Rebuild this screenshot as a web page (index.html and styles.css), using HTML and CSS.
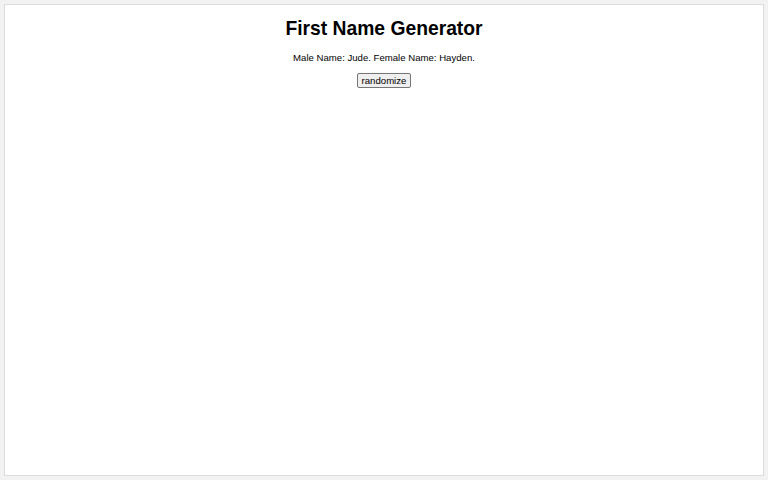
FILE: index.html
```html
<!DOCTYPE html>
<html lang="en">

<head>
    <meta charset="UTF-8">
    <meta name="viewport" content="width=device-width, initial-scale=1.0">
    <title>First Name Generator</title>
    <link rel="stylesheet" href="styles.css">
</head>

<body>
    <div class="page">
        <h1>First Name Generator</h1>
        <p id="names">Male Name: Jude. Female Name: Hayden.</p>
        <button id="randomize">randomize</button>
    </div>
</body>

</html>
```
FILE: styles.css
```css
html,
body {
    height: 100%;
}

body {
    margin: 0;
    padding: 4px;
    box-sizing: border-box;
    background-color: #f2f2f2;
    font-family: 'Liberation Sans', Arial, sans-serif;
    color: #000;
}

.page {
    height: 100%;
    box-sizing: border-box;
    background-color: #fff;
    border: 1px solid #dcdcdc;
    text-align: center;
    padding-top: 13px;
}

h1 {
    font-size: 19.3px;
    margin: 0 0 12px;
}

#names {
    font-size: 9.6px;
    margin: 0 0 7px;
}

#randomize {
    font-family: 'Liberation Sans', Arial, sans-serif;
    font-size: 9.6px;
    padding: 1px 4px;
    background-color: #efefef;
    border: 1px solid #767676;
    border-radius: 2px;
}
```
